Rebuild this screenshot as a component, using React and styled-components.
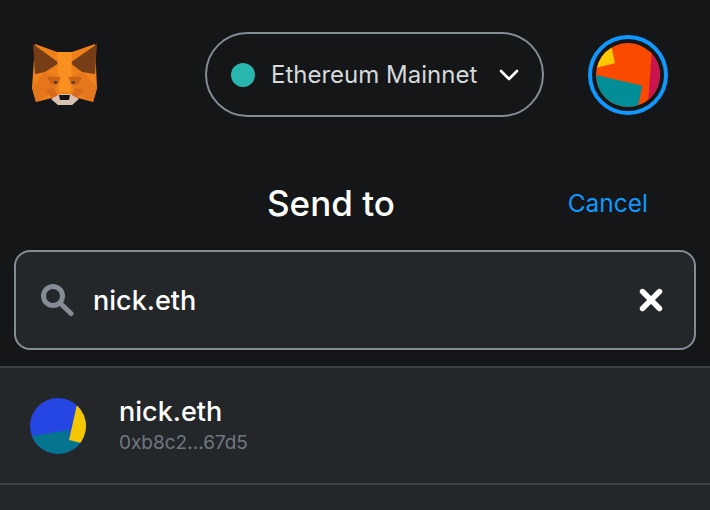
import React from "react";
import styled, { createGlobalStyle } from "styled-components";

const Global = createGlobalStyle`
  html, body { margin: 0; padding: 0; background: #141618; }
  body { font-family: Inter, "Liberation Sans", sans-serif; }
`;

const Page = styled.div`
  width: 710px;
  height: 510px;
  overflow: hidden;
  display: flex;
  flex-direction: column;
`;

const Header = styled.div`
  height: 150px;
  padding: 32px 42px 0 32px;
  box-sizing: border-box;
  display: flex;
  align-items: flex-start;
`;

const Fox = styled.svg`
  width: 65px;
  height: 62px;
  margin-top: 12px;
  margin-right: 108px;
`;

const NetworkPill = styled.div`
  width: 339px;
  height: 85px;
  box-sizing: border-box;
  border: 2px solid #848c96;
  border-radius: 43px;
  display: flex;
  align-items: center;
  padding-left: 24px;
  color: #d6d9dc;
  font-size: 24px;
  font-weight: 400;
`;

const Dot = styled.span`
  width: 24px;
  height: 24px;
  border-radius: 50%;
  background: #29b6af;
  margin-right: 16px;
`;

const Chevron = styled.svg`
  flex: none;
  width: 20px;
  height: 12px;
  margin-left: 22px;
`;

const AccountRing = styled.div`
  width: 80px;
  height: 80px;
  margin-top: 3px;
  margin-left: auto;
  box-sizing: border-box;
  border: 4px solid #1098fc;
  border-radius: 50%;
  display: flex;
  align-items: center;
  justify-content: center;
`;

const Blockie = styled.svg`
  display: block;
  border-radius: 50%;
  width: ${(p) => p.size}px;
  height: ${(p) => p.size}px;
`;

const TitleRow = styled.div`
  height: 100px;
  padding: 0 62px 0 267px;
  box-sizing: border-box;
  display: flex;
  justify-content: space-between;
  align-items: flex-start;
`;

const Title = styled.h2`
  margin: 30px 0 0;
  font-size: 35px;
  line-height: 46px;
  font-weight: 450;
  color: #fff;
`;

const Cancel = styled.a`
  margin-top: 37px;
  font-size: 24.5px;
  line-height: 32px;
  color: #1098fc;
`;

const SearchBox = styled.div`
  margin: 0 14px;
  height: 100px;
  box-sizing: border-box;
  background: #24272a;
  border: 2px solid #848c96;
  border-radius: 16px;
  display: flex;
  align-items: center;
  padding: 0 31px 0 24px;
`;

const SearchText = styled.span`
  flex: 1;
  margin-left: 19px;
  font-size: 27px;
  font-weight: 450;
  color: #fff;
`;

const ResultList = styled.div`
  margin-top: 16px;
  flex: 1;
  background: #24272a;
  border-top: 2px solid #3b4046;
`;

const Row = styled.div`
  height: 117px;
  box-sizing: border-box;
  border-bottom: 2px solid #3b4046;
  display: flex;
  align-items: center;
  padding-left: 30px;
`;

const RowText = styled.div`
  margin-left: 33px;
  margin-top: -2px;
  display: flex;
  flex-direction: column;
`;

const Name = styled.span`
  font-size: 27px;
  line-height: 36px;
  font-weight: 450;
  color: #fff;
`;

const Address = styled.span`
  font-size: 19px;
  line-height: 26px;
  color: #6f7882;
`;

const FoxLogo = () => (
  <Fox viewBox="32 44 65 62">
    <polygon fill="#f0801a" points="35,44 57,52 72,52 95,44 97,88 93,102 78,98 72,105 58,105 52,98 36,102 32,88" />
    <polygon fill="#e4761b" points="45,72 60,78 53,92 36,102 32,88" />
    <polygon fill="#e4761b" points="83,72 68,78 76,92 93,102 97,88" />
    <polygon fill="#763d16" points="33,44 59,63 45,72 35,74" />
    <polygon fill="#763d16" points="97,44 70,63 82,72 95,74" />
    <polygon fill="#f88f1f" points="57,52 72,52 71,92 59,92" />
    <polygon fill="#cd6116" points="47,77 61,77 57,85 51,84" />
    <polygon fill="#cd6116" points="82,77 68,77 72,85 78,84" />
    <polygon fill="#233447" points="54,81 58.5,82 55,84" />
    <polygon fill="#233447" points="75,81 70.5,82 74,84" />
    <polygon fill="#d9691c" points="45,90 54,88 58,97 52,98" />
    <polygon fill="#d9691c" points="84,90 75,88 71,97 77,98" />
    <polygon fill="#d7c1b3" points="51,99 60,94 70,94 79,99 72,105 58,105" />
    <polygon fill="#161616" points="59,95 70,95 69,100 60,100" />
  </Fox>
);

const AccountBlockie = () => (
  <Blockie size={64} viewBox="0 0 64 64">
    <rect width="64" height="64" fill="#fa4a00" />
    <polygon fill="#fac800" points="15.7,5.3 19,20.3 0,24.7 0,0 15.7,0" />
    <polygon fill="#018e97" points="0,32 46.3,42.7 42.3,62 42,64 0,64" />
    <polygon fill="#c9144e" points="55.7,10.3 52.3,57 64,57 64,10.3" />
  </Blockie>
);

const ResultBlockie = () => (
  <Blockie size={56} viewBox="0 0 56 56">
    <rect width="56" height="56" fill="#2546e2" />
    <polygon fill="#04748f" points="2.3,38 39,32 39,42 50,44.7 50,56 0,56" />
    <polygon fill="#f5c700" points="46.7,7.7 39,42 50,44.7 56,44 56,7" />
  </Blockie>
);

export default function App() {
  return (
    <Page>
      <Global />
      <Header>
        <FoxLogo />
        <NetworkPill>
          <Dot />
          Ethereum Mainnet
          <Chevron viewBox="0 0 20 12">
            <path d="M2 2 L10 10 L18 2" fill="none" stroke="#fff" strokeWidth="2.6" strokeLinecap="round" strokeLinejoin="round" />
          </Chevron>
        </NetworkPill>
        <AccountRing>
          <AccountBlockie />
        </AccountRing>
      </Header>
      <TitleRow>
        <Title>Send to</Title>
        <Cancel>Cancel</Cancel>
      </TitleRow>
      <SearchBox>
        <svg width="34" height="34" viewBox="0 0 34 34">
          <circle cx="13" cy="13" r="9.5" fill="none" stroke="#848c96" strokeWidth="5" />
          <path d="M20.5 20.5 L31 30.5" stroke="#848c96" strokeWidth="5" strokeLinecap="round" />
        </svg>
        <SearchText>nick.eth</SearchText>
        <svg width="24" height="24" viewBox="0 0 24 24">
          <path d="M3.5 3.5 L20.5 20.5 M20.5 3.5 L3.5 20.5" stroke="#fff" strokeWidth="5.4" strokeLinecap="round" />
        </svg>
      </SearchBox>
      <ResultList>
        <Row>
          <ResultBlockie />
          <RowText>
            <Name>nick.eth</Name>
            <Address>0xb8c2...67d5</Address>
          </RowText>
        </Row>
      </ResultList>
    </Page>
  );
}
